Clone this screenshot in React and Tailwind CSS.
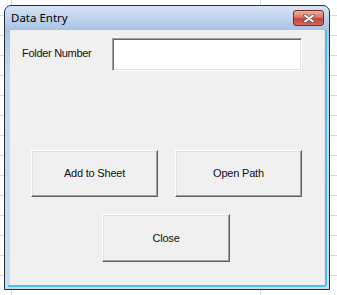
export default function App() {
  const btn =
    "flex items-center justify-center bg-[#f0f0f0] border border-t-white border-l-white border-r-[#5f5f5f] border-b-[#5f5f5f] shadow-[inset_-1px_-1px_0_#a0a0a0,inset_1px_1px_0_#e3e3e3] text-[11px] tracking-[-0.2px] text-[#111]";

  return (
    <div className="w-[337px] h-[295px] overflow-hidden bg-white bg-[linear-gradient(to_bottom,#d5dae2_1px,transparent_1px),linear-gradient(to_right,#d5dae2_1px,transparent_1px)] bg-[length:100%_20px,249px_100%] bg-[position:0_15px,11px_0] pt-[5px] pl-[4px] font-['Liberation_Sans',Arial,sans-serif]">
      {/* dialog window */}
      <div className="w-[326px] h-[285px] flex flex-col rounded-t-[7px] border border-[#27313d] bg-[linear-gradient(to_bottom,#d6e4f5,#a9c3e4_24px,#c4d7ee_60px,#cadcf0)]">
        {/* title bar */}
        <div className="h-[24px] flex items-center justify-between pl-[6px] pr-[5px]">
          <span className="font-['Noto_Sans',sans-serif] text-[11.5px] text-black">Data Entry</span>
          <div className="w-[31px] h-[16px] rounded-[3px] border border-[#7d2a22] bg-[linear-gradient(to_bottom,#eab0a4,#d7786b_45%,#c5453a_55%,#d0685a)] flex items-center justify-center">
            <svg width="12" height="9" viewBox="0 0 12 9">
              <path d="M2 1.5 L10 7.5 M10 1.5 L2 7.5" stroke="#6b4a48" strokeWidth="3.4" strokeLinecap="round" />
              <path d="M2 1.5 L10 7.5 M10 1.5 L2 7.5" stroke="#ffffff" strokeWidth="2" strokeLinecap="round" />
            </svg>
          </div>
        </div>

        {/* client area */}
        <div className="mx-[5px] h-[255px] bg-[#f0f0f0] flex flex-col shadow-[1px_0_0_#f3dbe6,3px_0_0_#43c4ec]">
          <div className="flex items-center mt-[8px] ml-[12px]">
            <span className="w-[90px] text-[11px] tracking-[-0.3px] text-[#111] mb-[2px]">Folder Number</span>
            <div className="w-[190px] h-[33px] bg-white border border-t-[#a0a0a0] border-l-[#a0a0a0] border-r-white border-b-white shadow-[inset_1px_1px_0_#696969,inset_-1px_-1px_0_#e3e3e3]" />
          </div>

          <div className="flex gap-[17px] ml-[21px] mt-[79px]">
            <div className={`${btn} w-[127px] h-[47px]`}>Add to Sheet</div>
            <div className={`${btn} w-[127px] h-[47px]`}>Open Path</div>
          </div>

          <div className="flex ml-[92px] mt-[17px]">
            <div className={`${btn} w-[128px] h-[48px]`}>Close</div>
          </div>
        </div>

        {/* bottom frame */}
        <div className="mx-[3px] h-[4px] border-t-2 border-[#43c4ec]" />
      </div>
    </div>
  );
}
